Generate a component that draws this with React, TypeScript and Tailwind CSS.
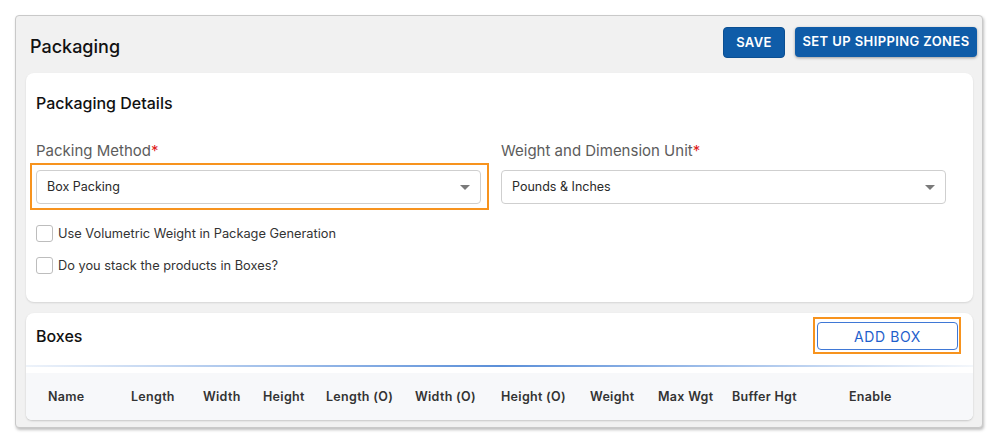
import { useState } from 'react';

const columns = [
  { label: 'Name', w: 'w-[83px]' },
  { label: 'Length', w: 'w-[72px]' },
  { label: 'Width', w: 'w-[60px]' },
  { label: 'Height', w: 'w-[63px]' },
  { label: 'Length (O)', w: 'w-[89px]' },
  { label: 'Width (O)', w: 'w-[86px]' },
  { label: 'Height (O)', w: 'w-[89px]' },
  { label: 'Weight', w: 'w-[68px]' },
  { label: 'Max Wgt', w: 'w-[74px]' },
  { label: 'Buffer Hgt', w: 'w-[117px]' },
  { label: 'Enable', w: 'w-[60px]' },
];

function Caret() {
  return (
    <svg width="10" height="5" viewBox="0 0 10 5" className="shrink-0">
      <path d="M0 0h10L5 5z" fill="#7a7a7a" />
    </svg>
  );
}

function SelectField({
  label,
  value,
  highlighted,
}: {
  label: string;
  value: string;
  highlighted?: boolean;
}) {
  return (
    <div className="flex flex-col">
      <label className="text-[15px] leading-[18px] text-[#5c5c5c] mb-[10px]">
        {label}
        <span className="text-[#e0201b]">*</span>
      </label>
      <div className="relative">
        {highlighted && (
          <div className="absolute -left-[6px] -right-[8px] -top-[7px] -bottom-[6px] border-2 border-[#f7931e] pointer-events-none" />
        )}
        <button className="w-full h-[34px] flex items-center justify-between pl-[10px] pr-[10px] bg-white border border-[#cfcfcf] rounded-[4px] text-left">
          <span className="text-[12.5px] text-[#2a2a2a]">{value}</span>
          <Caret />
        </button>
      </div>
    </div>
  );
}

function Check({ label }: { label: string }) {
  const [on, setOn] = useState(false);
  return (
    <label className="flex items-center gap-[5px] h-[17px] cursor-pointer">
      <span
        onClick={() => setOn(!on)}
        className="w-[17px] h-[17px] rounded-[3px] border border-[#bdbdbd] bg-white shrink-0"
      />
      <span className="text-[12.8px] text-[#333]">{label}</span>
    </label>
  );
}

export default function App() {
  return (
    <div
      className="w-[1000px] h-[442px] bg-white pl-[15px] pt-[15px] pr-[17px] pb-[14px]"
      style={{ fontFamily: 'Inter, "Noto Sans", sans-serif' }}
    >
      <div className="h-full bg-[#f1f1f1] border border-[#c9c9c9] rounded-[4px] shadow-[1px_2px_3px_rgba(0,0,0,0.25)] pl-[10px] pr-[5px] pt-[11px] flex flex-col">
        {/* header */}
        <div className="flex items-center justify-between pl-[4px] h-[31px]">
          <h1 className="text-[18px] font-medium text-[#111] mt-[8px]">Packaging</h1>
          <div className="flex items-start gap-[10px]">
            <button className="w-[62px] h-[31px] bg-[#0f5ca8] rounded-[4px] text-white text-[13px] font-semibold tracking-[0.4px] border border-[#0b4f92]">
              SAVE
            </button>
            <button className="w-[182px] h-[30px] bg-[#0f5ca8] rounded-[4px] text-white text-[13px] font-semibold tracking-[0.4px] shadow-[0_1px_3px_rgba(0,0,0,0.35)]">
              SET UP SHIPPING ZONES
            </button>
          </div>
        </div>

        {/* packaging details */}
        <div className="mt-[15px] mr-[4px] h-[229px] bg-white rounded-[8px] shadow-[0_1px_2px_rgba(0,0,0,0.12)] pl-[10px] pr-[27px] pt-[20px]">
          <h2 className="text-[16px] font-medium text-[#111] leading-[20px]">Packaging Details</h2>
          <div className="grid grid-cols-2 gap-[20px] mt-[29px]">
            <SelectField label="Packing Method" value="Box Packing" highlighted />
            <SelectField label="Weight and Dimension Unit" value="Pounds & Inches" />
          </div>
          <div className="flex flex-col gap-[15px] mt-[21px]">
            <Check label="Use Volumetric Weight in Package Generation" />
            <Check label="Do you stack the products in Boxes?" />
          </div>
        </div>

        {/* boxes */}
        <div className="mt-[11px] mr-[4px] h-[107px] bg-white rounded-t-[8px] rounded-b-[6px] shadow-[0_1px_2px_rgba(0,0,0,0.18)] flex flex-col overflow-hidden">
          <div className="flex items-start justify-between pl-[10px] pr-[15px] h-[52px] pt-[9px]">
            <h2 className="text-[16px] font-medium text-[#111] leading-[28px]">Boxes</h2>
            <div className="relative">
              <div className="absolute -left-[4px] -right-[3px] -top-[5px] -bottom-[4px] border-2 border-[#f7931e] pointer-events-none" />
              <button className="w-[141px] h-[28px] border border-[#3f78d6] rounded-[4px] text-[14px] text-[#1f5fcc] tracking-[0.6px]">
                ADD BOX
              </button>
            </div>
          </div>
          <div className="h-[2px] bg-gradient-to-r from-[#eef3fa] via-[#5b8fd8] to-[#f4f7fb]" />
          <div className="h-[6px]" />
          <div className="flex-1 bg-[#f7f8fa] flex items-center pl-[22px] pt-[1px]">
            {columns.map((c) => (
              <div key={c.label} className={`${c.w} shrink-0 text-[12.5px] font-semibold text-[#333] tracking-[0.3px]`}>
                {c.label}
              </div>
            ))}
          </div>
        </div>
      </div>
    </div>
  );
}
